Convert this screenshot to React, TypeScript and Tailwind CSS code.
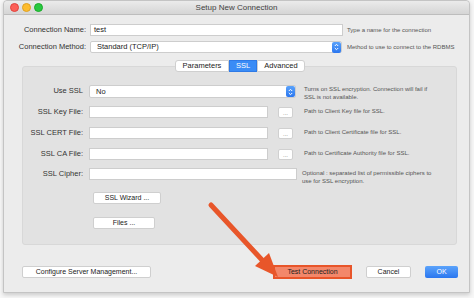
import React from "react";

const font = { fontFamily: '"Liberation Sans", Arial, sans-serif' };

function Stepper() {
  return (
    <div className="w-[9px] h-[11px] rounded-[2px] bg-gradient-to-b from-[#5aa2fb] to-[#2a76ef] flex items-center justify-center">
      <svg width="5" height="8" viewBox="0 0 5 8">
        <path d="M0.8 3 L2.5 1.3 L4.2 3" stroke="white" strokeWidth="1" fill="none" />
        <path d="M0.8 5 L2.5 6.7 L4.2 5" stroke="white" strokeWidth="1" fill="none" />
      </svg>
    </div>
  );
}

function Row({ label, children }: { label: string; children: React.ReactNode }) {
  return (
    <div className="flex items-start">
      <div className="w-[60px] shrink-0 text-right text-[7.5px] leading-[12px] text-[#333]">{label}</div>
      <div className="ml-[6px] flex items-start">{children}</div>
    </div>
  );
}

function FileRow({ label, desc }: { label: string; desc: string }) {
  return (
    <Row label={label}>
      <div className="w-[179px] h-[12px] bg-white border border-[#cdcdcd]" />
      <div className="ml-[10px] mt-[1px] w-[15px] h-[11px] bg-white border border-[#d0d0d0] rounded-[2px] flex items-center justify-center text-[6px] text-[#777] leading-none">
        ...
      </div>
      <div className="ml-[11px] mt-[1px] text-[6px] leading-[8px] text-[#555]">{desc}</div>
    </Row>
  );
}

export default function App() {
  return (
    <div className="relative w-[474px] h-[298px] bg-[#f7f7f7] overflow-hidden" style={font}>
      <div className="ml-[3px] w-[467px] h-[293px] flex flex-col border border-[#c4c4c4] rounded-t-[4px] bg-[#ececec] shadow-[0_2px_4px_rgba(0,0,0,0.18)]">
        {/* title bar */}
        <div className="h-[14px] shrink-0 grid grid-cols-[1fr_auto_1fr] items-center bg-gradient-to-b from-[#ebebeb] to-[#d5d5d5] border-b border-[#bdbdbd] rounded-t-[4px]">
          <div className="flex items-center gap-[3px] pl-[6px]">
            <span className="w-[9px] h-[9px] rounded-full bg-[#fc5f57] border border-[#e0443e]" />
            <span className="w-[9px] h-[9px] rounded-full bg-[#fdbc2e] border border-[#dea123]" />
            <span className="w-[9px] h-[9px] rounded-full bg-[#28c840] border border-[#1aab29]" />
          </div>
          <div className="text-[8px] text-[#3f3f3f] leading-none">Setup New Connection</div>
          <div />
        </div>

        {/* connection name */}
        <div className="flex items-center mt-[9px]">
          <div className="w-[82px] text-right text-[7.5px] text-[#333]">Connection Name:</div>
          <div className="ml-[4px] w-[253px] h-[12px] bg-white border border-[#cdcdcd] text-[7.5px] leading-[10px] pl-[3px] text-[#222]">
            test
          </div>
          <div className="ml-[4px] text-[6px] text-[#555]">Type a name for the connection</div>
        </div>

        {/* connection method */}
        <div className="flex items-center mt-[5px]">
          <div className="w-[82px] text-right text-[7.5px] text-[#333]">Connection Method:</div>
          <div className="ml-[4px] w-[252px] h-[12px] bg-white border border-[#cdcdcd] rounded-[2px] flex items-center justify-between pl-[6px]">
            <span className="text-[7.5px] text-[#222]">Standard (TCP/IP)</span>
            <Stepper />
          </div>
          <div className="ml-[5px] text-[6px] text-[#555]">Method to use to connect to the RDBMS</div>
        </div>

        {/* tabs */}
        <div className="relative z-10 mt-[7px] ml-[171px] flex h-[12px] text-[7.5px] leading-[10px]">
          <div className="w-[54px] bg-white border border-[#cfcfcf] rounded-l-[3px] text-center text-[#222]">Parameters</div>
          <div className="w-[28px] bg-[#3a8cf6] border border-[#2f7ae6] text-center text-white">SSL</div>
          <div className="w-[48px] bg-white border border-[#cfcfcf] rounded-r-[3px] text-center text-[#222]">Advanced</div>
        </div>

        {/* panel */}
        <div className="mt-[-6px] ml-[18px] w-[435px] h-[179px] bg-[#e2e2e2] border border-[#d8d8d8] rounded-[3px] pt-[18px] flex flex-col">
          <Row label="Use SSL">
            <div className="w-[207px] h-[13px] bg-white border border-[#cdcdcd] rounded-[2px] flex items-center justify-between pl-[6px]">
              <span className="text-[7.5px] text-[#222]">No</span>
              <Stepper />
            </div>
            <div className="ml-[8px] text-[6px] leading-[8px] text-[#555]">
              Turns on SSL encryption. Connection will fail if
              <br />
              SSL is not available.
            </div>
          </Row>
          <div className="mt-[5px] flex flex-col gap-[9px]">
            <FileRow label="SSL Key File:" desc="Path to Client Key file for SSL." />
            <FileRow label="SSL CERT File:" desc="Path to Client Certificate file for SSL." />
            <FileRow label="SSL CA File:" desc="Path to Certificate Authority file for SSL." />
          </div>
          <div className="mt-[8px]">
            <Row label="SSL Cipher:">
              <div className="w-[208px] h-[12px] bg-white border border-[#cdcdcd]" />
              <div className="ml-[5px] mt-[1px] text-[6px] leading-[8px] text-[#555]">
                Optional : separated list of permissible ciphers to
                <br />
                use for SSL encryption.
              </div>
            </Row>
          </div>
          <div className="ml-[70px] mt-[7px] w-[68px] h-[12px] bg-white border border-[#cfcfcf] rounded-[2px] text-center text-[7px] leading-[10px] text-[#222]">
            SSL Wizard ...
          </div>
          <div className="ml-[70px] mt-[13px] w-[62px] h-[12px] bg-white border border-[#cfcfcf] rounded-[2px] text-center text-[7px] leading-[10px] text-[#222]">
            Files ...
          </div>
        </div>

        {/* bottom buttons */}
        <div className="mt-[20px] flex items-center">
          <div className="ml-[18px] w-[129px] h-[12px] bg-white border border-[#cfcfcf] rounded-[2px] text-center text-[7px] leading-[10px] text-[#222]">
            Configure Server Management...
          </div>
          <div className="ml-[122px] w-[79px] h-[14px] bg-[#f3876a] border-2 border-[#e8552a] text-center text-[7px] leading-[10px] text-[#222]">
            Test Connection
          </div>
          <div className="ml-[14px] w-[45px] h-[12px] bg-white border border-[#cfcfcf] rounded-[2px] text-center text-[7px] leading-[10px] text-[#222]">
            Cancel
          </div>
          <div className="ml-[14px] w-[33px] h-[12px] bg-gradient-to-b from-[#5ba3fb] to-[#2a76ef] rounded-[2px] text-center text-[7px] leading-[12px] text-white">
            OK
          </div>
        </div>
      </div>

      {/* annotation arrow */}
      <svg className="absolute left-0 top-0" width="474" height="298" viewBox="0 0 474 298">
        <line x1="211" y1="205" x2="263" y2="261" stroke="#e8562a" strokeWidth="5" strokeLinecap="round" />
        <polygon points="255,266 269,253 278,277" fill="#e8562a" />
      </svg>
    </div>
  );
}
